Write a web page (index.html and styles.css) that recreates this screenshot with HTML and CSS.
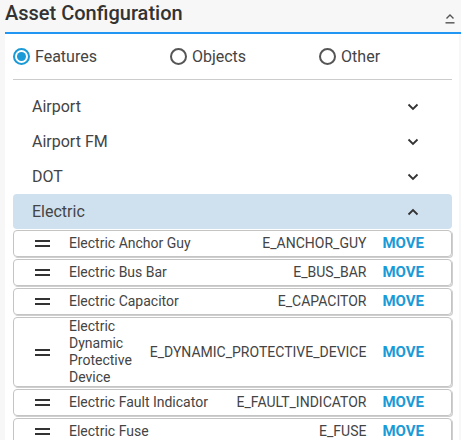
FILE: index.html
```html
<!DOCTYPE html>
<html>

<head lang="en">
    <meta charset="UTF-8">
    <title>Asset Configuration</title>
    <link rel="stylesheet" href="styles.css">
</head>

<body>
    <div class="header">
        <span class="title">Asset Configuration</span>
        <span class="collapse">
            <svg width="10" height="12" viewBox="0 0 10 12">
                <path d="M1.5 5.5 L5 2 L8.5 5.5" fill="none" stroke="#555" stroke-width="1.4" />
                <rect x="0.5" y="9" width="9" height="1.6" fill="#666" />
            </svg>
        </span>
    </div>

    <div class="panel">
        <div class="radios">
            <label class="radio checked"><span class="dot"></span>Features</label>
            <label class="radio"><span class="dot"></span>Objects</label>
            <label class="radio"><span class="dot"></span>Other</label>
        </div>
        <hr class="divider">

        <div class="group">Airport
            <svg class="chev" width="12" height="8" viewBox="0 0 12 8"><path d="M1.5 1.5 L6 6 L10.5 1.5" fill="none" stroke="#333" stroke-width="1.8" /></svg>
        </div>
        <div class="group">Airport FM
            <svg class="chev" width="12" height="8" viewBox="0 0 12 8"><path d="M1.5 1.5 L6 6 L10.5 1.5" fill="none" stroke="#333" stroke-width="1.8" /></svg>
        </div>
        <div class="group">DOT
            <svg class="chev" width="12" height="8" viewBox="0 0 12 8"><path d="M1.5 1.5 L6 6 L10.5 1.5" fill="none" stroke="#333" stroke-width="1.8" /></svg>
        </div>
        <div class="group open">Electric
            <svg class="chev" width="12" height="8" viewBox="0 0 12 8"><path d="M1.5 6.5 L6 2 L10.5 6.5" fill="none" stroke="#333" stroke-width="1.8" /></svg>
        </div>

        <div class="items">
            <div class="item">
                <span class="handle"></span>
                <span class="name">Electric Anchor Guy</span>
                <span class="code">E_ANCHOR_GUY</span>
                <span class="move">MOVE</span>
            </div>
            <div class="item">
                <span class="handle"></span>
                <span class="name">Electric Bus Bar</span>
                <span class="code">E_BUS_BAR</span>
                <span class="move">MOVE</span>
            </div>
            <div class="item">
                <span class="handle"></span>
                <span class="name">Electric Capacitor</span>
                <span class="code">E_CAPACITOR</span>
                <span class="move">MOVE</span>
            </div>
            <div class="item">
                <span class="handle"></span>
                <span class="name">Electric Dynamic Protective Device</span>
                <span class="code">E_DYNAMIC_PROTECTIVE_DEVICE</span>
                <span class="move">MOVE</span>
            </div>
            <div class="item">
                <span class="handle"></span>
                <span class="name">Electric Fault Indicator</span>
                <span class="code">E_FAULT_INDICATOR</span>
                <span class="move">MOVE</span>
            </div>
            <div class="item">
                <span class="handle"></span>
                <span class="name">Electric Fuse</span>
                <span class="code">E_FUSE</span>
                <span class="move">MOVE</span>
            </div>
        </div>
    </div>
</body>

</html>
```

FILE: styles.css
```css
body {
    margin: 0;
    background: #f7f7f7;
    font-family: Roboto, "Liberation Sans", sans-serif;
    color: #333;
    overflow: hidden;
}

.header {
    display: flex;
    align-items: center;
    justify-content: space-between;
    height: 32px;
    margin-left: 5px;
    padding-right: 6px;
    border-bottom: 2px solid #2196f3;
}

.title {
    font-size: 20px;
    font-weight: 500;
    color: #333;
    margin-top: -6px;
}

.collapse {
    display: flex;
    margin-top: 6px;
}

.panel {
    margin: 0 2px 0 5px;
    padding: 0 7px 0 8px;
    background: #fff;
    height: 420px;
}

.radios {
    display: flex;
    gap: 73px;
    height: 45px;
    align-items: center;
    font-size: 16px;
    color: #444;
}

.radio {
    display: flex;
    align-items: center;
}

.dot {
    box-sizing: border-box;
    width: 17px;
    height: 17px;
    border: 2px solid #555;
    border-radius: 50%;
    margin-right: 5px;
    position: relative;
}

.checked .dot {
    border-color: #1a9ad6;
}

.checked .dot::after {
    content: "";
    position: absolute;
    left: 2px;
    top: 2px;
    width: 9px;
    height: 9px;
    border-radius: 50%;
    background: #1a9ad6;
}

.divider {
    margin: 0 0 9px;
    border: 0;
    border-top: 1px solid #ccc;
}

.group {
    display: flex;
    align-items: center;
    justify-content: space-between;
    height: 35px;
    padding: 0 33px 0 19px;
    font-size: 16px;
    color: #444;
    border-radius: 4px;
}

.group.open {
    background: #cfe0ee;
}

.items {
    display: flex;
    flex-direction: column;
    gap: 2px;
    margin-top: 1px;
}

.item {
    display: flex;
    align-items: center;
    min-height: 25px;
    border: 1px solid #c4c4c4;
    box-shadow: 1px 1px 0 #cfcfcf;
    border-radius: 4px;
    padding-right: 27px;
    font-size: 14px;
    line-height: 17px;
    color: #444;
}

.handle {
    flex: none;
    width: 15px;
    height: 3px;
    margin: 0 19px 0 21px;
    border-top: 2px solid #333;
    border-bottom: 2px solid #333;
}

.name {
    flex: 1 1 auto;
    min-width: 0;
}

.code {
    flex: none;
    white-space: nowrap;
    margin-left: 14px;
}

.move {
    flex: none;
    margin-left: 16px;
    font-size: 15px;
    font-weight: bold;
    color: #1a9ad6;
}
```
